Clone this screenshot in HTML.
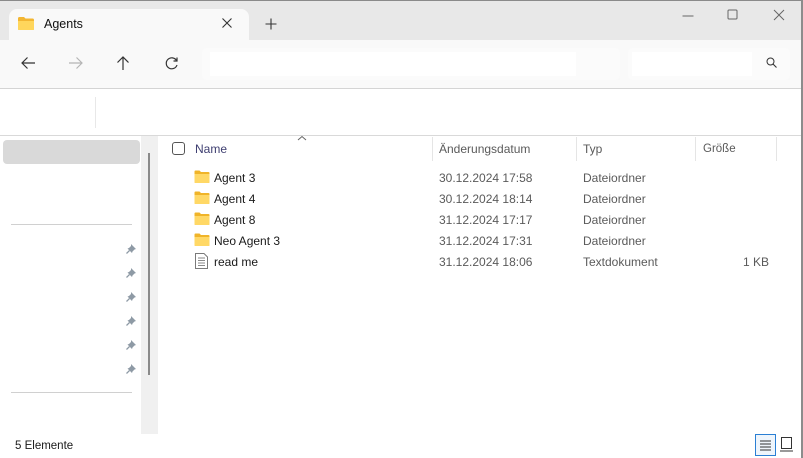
<!DOCTYPE html>
<html><head><meta charset="utf-8"><style>
*{margin:0;padding:0;box-sizing:border-box}
body{width:803px;height:458px;overflow:hidden;background:#fff;font-family:"Liberation Sans",sans-serif;font-size:12px;color:#1a1a1a;position:relative}
.a{position:absolute}
.t{position:absolute;white-space:nowrap;line-height:14px}
.g{color:#5a5a5a}
</style></head><body>
<!-- title bar -->
<div class="a" style="left:0;top:0;width:803px;height:40px;background:#e8e8e8"></div>
<div class="a" style="left:0;top:0;width:803px;height:1px;background:#8a8a8a"></div>
<div class="a" style="left:9px;top:9px;width:240px;height:31px;background:#f9f9f9;border-radius:8px 8px 0 0"></div>
<svg class="a" style="left:17px;top:16px" width="18" height="15" viewBox="0 0 18 15"><path d="M1 2.5Q1 1 2.5 1H7l1.5 1.5H15.5Q17 2.5 17 4V13Q17 14 16 14H2Q1 14 1 13Z" fill="#f3b632"/><path d="M1 5H17V13Q17 14 16 14H2Q1 14 1 13Z" fill="#ffd65c"/></svg>
<div class="t" style="left:44px;top:17px;font-size:12.5px;color:#111">Agents</div>
<svg class="a" style="left:221px;top:17px" width="12" height="12"><path d="M1.5 1.5L10.5 10.5M10.5 1.5L1.5 10.5" stroke="#333" stroke-width="1.1"/></svg>
<svg class="a" style="left:265px;top:18px" width="12" height="12"><path d="M6 0.5V11.5M0.5 6H11.5" stroke="#333" stroke-width="1.1"/></svg>
<svg class="a" style="left:682px;top:10px" width="12" height="12"><path d="M0.5 6H11.5" stroke="#666" stroke-width="1"/></svg>
<svg class="a" style="left:727px;top:9px" width="12" height="12"><rect x="1" y="1" width="9" height="9" rx="1" fill="none" stroke="#666"/></svg>
<svg class="a" style="left:773px;top:9px" width="12" height="12"><path d="M1 1L11 11M11 1L1 11" stroke="#666" stroke-width="1"/></svg>
<!-- toolbar -->
<div class="a" style="left:0;top:40px;width:803px;height:48px;background:#f9f9f9"></div>
<svg class="a" style="left:20px;top:56px" width="16" height="14"><path d="M15 7H2M7.5 1.5L2 7L7.5 12.5" fill="none" stroke="#333" stroke-width="1.2"/></svg>
<svg class="a" style="left:68px;top:56px" width="16" height="14"><path d="M1 7H14M8.5 1.5L14 7L8.5 12.5" fill="none" stroke="#b5b5b5" stroke-width="1.2"/></svg>
<svg class="a" style="left:116px;top:55px" width="14" height="16"><path d="M7 15V2M1.5 7.5L7 2L12.5 7.5" fill="none" stroke="#333" stroke-width="1.2"/></svg>
<svg class="a" style="left:164px;top:56px" width="16" height="16"><path d="M12.5 4.5A5.5 5.5 0 1 0 13 9" fill="none" stroke="#333" stroke-width="1.2"/><path d="M13 1.5V5H9.5" fill="none" stroke="#333" stroke-width="1.2"/></svg>
<div class="a" style="left:202px;top:48px;width:418px;height:32px;background:#fbfbfb;border-radius:5px"></div>
<div class="a" style="left:210px;top:52px;width:366px;height:24px;background:#fff"></div>
<div class="a" style="left:628px;top:48px;width:162px;height:32px;background:#fbfbfb;border-radius:5px"></div>
<div class="a" style="left:632px;top:52px;width:120px;height:24px;background:#fff"></div>
<svg class="a" style="left:766px;top:57px" width="12" height="12"><circle cx="4.5" cy="4.5" r="3.5" fill="none" stroke="#333"/><path d="M7 7L10.5 10.5" stroke="#333" stroke-width="1.1"/></svg>
<div class="a" style="left:0;top:88px;width:803px;height:1px;background:#d4d4d4"></div>
<div class="a" style="left:95px;top:97px;width:1px;height:31px;background:#e8e8e8"></div>
<div class="a" style="left:0;top:135px;width:803px;height:1px;background:#d9d9d9"></div>
<!-- right border -->
<div class="a" style="left:801px;top:0;width:2px;height:458px;background:#8c8c8c"></div>
<!-- sidebar -->
<div class="a" style="left:3px;top:140px;width:137px;height:24px;background:#d9d9d9;border-radius:4px"></div>
<div class="a" style="left:11px;top:224px;width:121px;height:1px;background:#d0d0d0"></div>
<div class="a" style="left:11px;top:392px;width:121px;height:1px;background:#d0d0d0"></div>
<div class="a" style="left:141px;top:136px;width:17px;height:298px;background:#f0f0f0"></div>
<div class="a" style="left:148px;top:153px;width:2px;height:222px;background:#8a8a8a"></div>
<svg width="0" height="0" style="position:absolute"><defs><g id="pin"><path d="M5 1L10 6L8.5 6.5L6.5 8.5L6 10L1.5 5.5L3 5L5 3Z" fill="#8e9aa5"/><path d="M3.5 7.5L0.5 10.5" stroke="#8e9aa5" stroke-width="1.3"/></g></defs></svg>
<svg class="a" style="left:126px;top:243px" width="11" height="11"><use href="#pin"/></svg>
<svg class="a" style="left:126px;top:267px" width="11" height="11"><use href="#pin"/></svg>
<svg class="a" style="left:126px;top:291px" width="11" height="11"><use href="#pin"/></svg>
<svg class="a" style="left:126px;top:315px" width="11" height="11"><use href="#pin"/></svg>
<svg class="a" style="left:126px;top:339px" width="11" height="11"><use href="#pin"/></svg>
<svg class="a" style="left:126px;top:363px" width="11" height="11"><use href="#pin"/></svg>
<!-- header -->
<div class="a" style="left:172px;top:142px;width:13px;height:13px;border:1px solid #555;border-radius:3px"></div>
<div class="t" style="left:195px;top:142px;color:#3e3e70">Name</div>
<svg class="a" style="left:297px;top:135px" width="10" height="6"><path d="M1 5L5 1.5L9 5" fill="none" stroke="#666"/></svg>
<div class="a" style="left:432px;top:137px;width:1px;height:24px;background:#e5e5e5"></div>
<div class="a" style="left:576px;top:137px;width:1px;height:24px;background:#e5e5e5"></div>
<div class="a" style="left:695px;top:137px;width:1px;height:24px;background:#e5e5e5"></div>
<div class="a" style="left:776px;top:137px;width:1px;height:24px;background:#e5e5e5"></div>
<div class="t g" style="left:439px;top:142px">Änderungsdatum</div>
<div class="t g" style="left:583px;top:142px">Typ</div>
<div class="t g" style="left:703px;top:142px;font-size:11.5px">Größe</div>
<!-- rows -->
<svg width="0" height="0" style="position:absolute"><defs><g id="fold"><path d="M0.5 1.5Q0.5 0.5 1.5 0.5H5.5L7 2H14.5Q15.5 2 15.5 3V12Q15.5 13 14.5 13H1.5Q0.5 13 0.5 12Z" fill="#f0b429"/><path d="M0.5 4H15.5V12Q15.5 13 14.5 13H1.5Q0.5 13 0.5 12Z" fill="#ffd866"/></g></defs></svg>
<svg class="a" style="left:194px;top:170px" width="16" height="14"><use href="#fold"/></svg>
<svg class="a" style="left:194px;top:191px" width="16" height="14"><use href="#fold"/></svg>
<svg class="a" style="left:194px;top:212px" width="16" height="14"><use href="#fold"/></svg>
<svg class="a" style="left:194px;top:233px" width="16" height="14"><use href="#fold"/></svg>
<svg class="a" style="left:195px;top:253px" width="13" height="16"><path d="M0.5 0.5H9L12.5 4V15.5H0.5Z" fill="#fff" stroke="#7a7a7a"/><path d="M3 5H10M3 7.5H10M3 10H10M3 12.5H10" stroke="#8a8a8a"/></svg>
<div class="t" style="left:214px;top:171px">Agent 3</div>
<div class="t" style="left:214px;top:192px">Agent 4</div>
<div class="t" style="left:214px;top:213px">Agent 8</div>
<div class="t" style="left:214px;top:234px">Neo Agent 3</div>
<div class="t" style="left:214px;top:255px">read me</div>
<div class="t g" style="left:439px;top:171px">30.12.2024 17:58</div>
<div class="t g" style="left:439px;top:192px">30.12.2024 18:14</div>
<div class="t g" style="left:439px;top:213px">31.12.2024 17:17</div>
<div class="t g" style="left:439px;top:234px">31.12.2024 17:31</div>
<div class="t g" style="left:439px;top:255px">31.12.2024 18:06</div>
<div class="t g" style="left:583px;top:171px">Dateiordner</div>
<div class="t g" style="left:583px;top:192px">Dateiordner</div>
<div class="t g" style="left:583px;top:213px">Dateiordner</div>
<div class="t g" style="left:583px;top:234px">Dateiordner</div>
<div class="t g" style="left:583px;top:255px">Textdokument</div>
<div class="t g" style="left:700px;top:255px;width:69px;text-align:right">1 KB</div>
<!-- status -->
<div class="t" style="left:15px;top:439px;font-size:11.5px">5 Elemente</div>
<div class="a" style="left:755px;top:434px;width:21px;height:22px;border:1px solid #2a7fd4;background:#eef5fc"></div>
<svg class="a" style="left:759px;top:439px" width="13" height="12"><path d="M1 2H12M1 5H12M1 8H12M1 11H12" stroke="#333"/></svg>
<svg class="a" style="left:780px;top:437px" width="14" height="15"><rect x="1.5" y="0.5" width="10" height="11" fill="none" stroke="#333"/><path d="M0 14H13" stroke="#333"/></svg>
</body></html>
